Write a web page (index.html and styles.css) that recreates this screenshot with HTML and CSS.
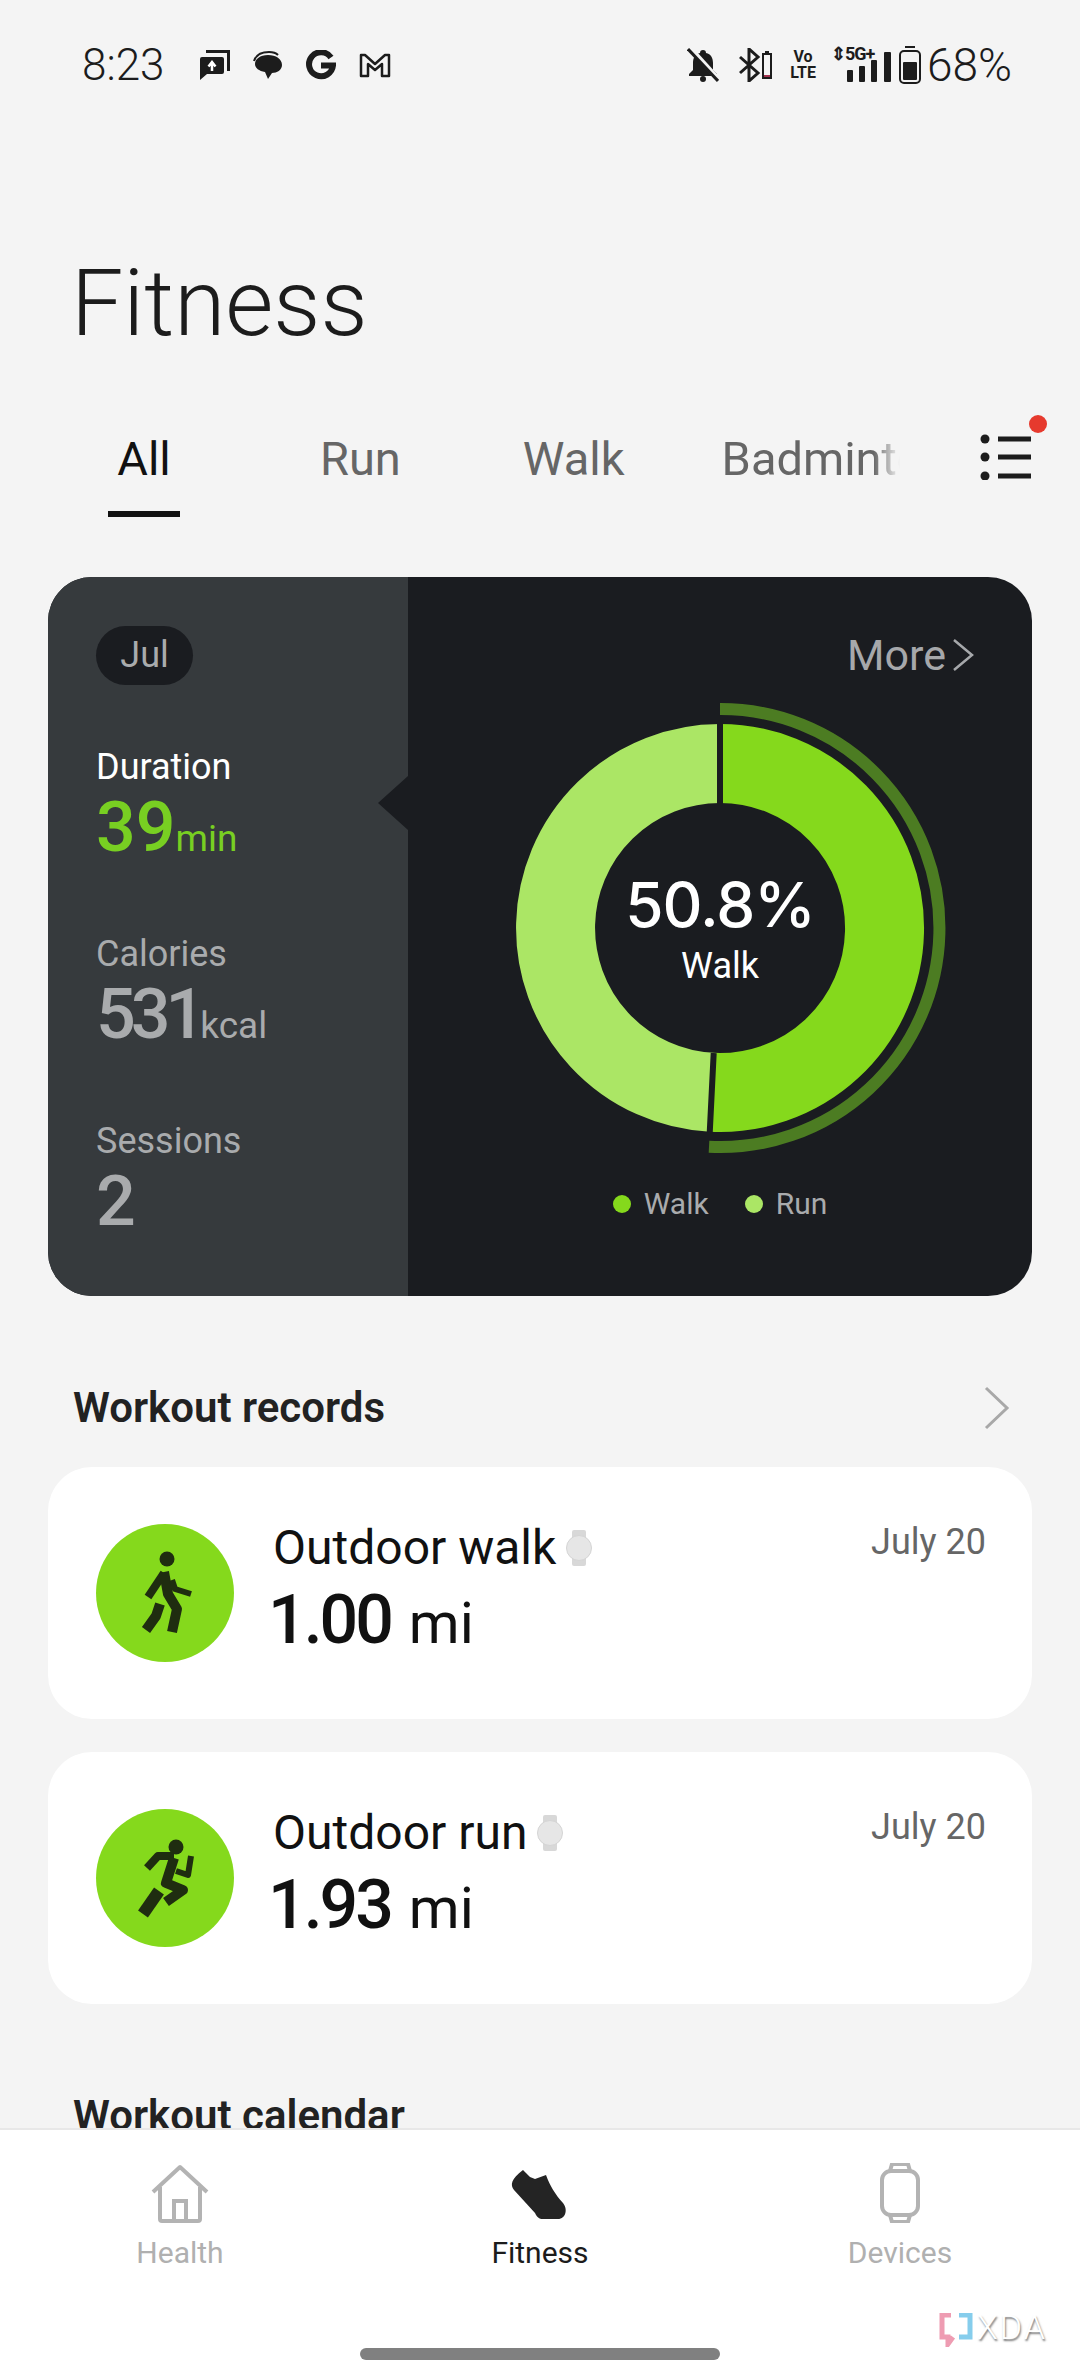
FILE: index.html
```html
<!DOCTYPE html>
<html>
  <head>
    <meta charset="UTF-8" />
    <title>Fitness</title>
    <link rel="stylesheet" href="styles.css">
  </head>
  <body>
    <main class="content">
      <div class="status-bar">
        <span class="clock">8:23</span>
        <div class="notif-icons">
          <svg width="30" height="30" viewBox="0 0 30 30"><path d="M6 0h24v21h-3V3H6z" fill="#1c1c1c"/><path d="M2 7h20a2 2 0 0 1 2 2v13a2 2 0 0 1-2 2H7l-7 6V9a2 2 0 0 1 2-2z" fill="#1c1c1c"/><path d="M12 21v-7M8.5 16.500L12 12l3.500 4.500" stroke="#fff" stroke-width="2.500" fill="none"/></svg>
          <svg width="30" height="30" viewBox="0 0 30 30"><path d="M15 5c8 0 14 4 14 10 0 5-5 8-10 8l-4 6-3-7C6 21 2 18 2 14c0-5 5-9 13-9z" fill="#1c1c1c"/><path d="M1 11c2-6 8-9 15-9 4 0 7 1 9 3" stroke="#1c1c1c" stroke-width="2" fill="none"/></svg>
          <svg width="30" height="30" viewBox="0 0 30 30"><path d="M25 7.500A12 12 0 1 0 27 15.500H15" stroke="#1c1c1c" stroke-width="6" fill="none"/></svg>
          <svg width="32" height="26" viewBox="0 0 32 26"><path d="M2 24V3h4l10 9 10-9h4v21h-7V12l-7 6-7-6v12z" stroke="#1c1c1c" stroke-width="2.500" fill="none" stroke-linejoin="round"/></svg>
        </div>
        <div class="sys-icons">
          <svg class="ic-mute" width="32" height="34" viewBox="0 0 32 34"><path d="M16 2c-2 0-3 1-3 3-5 1-7 5-7 10v7l-4 4v2h28v-2l-4-4v-7c0-5-2-9-7-10 0-2-1-3-3-3z" fill="#1c1c1c"/><circle cx="16" cy="31" r="3" fill="#1c1c1c"/><path d="M3 0l29 32" stroke="#f4f4f4" stroke-width="5"/><path d="M1 1l30 32" stroke="#1c1c1c" stroke-width="3"/></svg>
          <svg class="ic-bt" width="34" height="34" viewBox="0 0 34 34"><path d="M2 9l18 16-9 8V1l9 8L2 25" stroke="#1c1c1c" stroke-width="3" fill="none"/><path d="M25 6h8v24h-8z" fill="none" stroke="#1c1c1c" stroke-width="2"/><path d="M27 3h4v3h-4z" fill="#1c1c1c"/><path d="M26 27h6v2h-6z" fill="#a3324f"/></svg>
          <div class="volte"><span>Vo</span><span>LTE</span></div>
          <div class="signal">
            <span class="five-g">&#8661;5G+</span>
            <svg width="44" height="30" viewBox="0 0 44 30"><rect y="18" width="6" height="12" rx="1" fill="#1c1c1c"/><rect x="12" y="14" width="6" height="16" rx="1" fill="#1c1c1c"/><rect x="24" y="8" width="6" height="22" rx="1" fill="#1c1c1c"/><rect x="37" width="7" height="30" rx="1" fill="#1c1c1c"/></svg>
          </div>
          <svg class="ic-batt" width="22" height="38" viewBox="0 0 22 38"><rect x="6" width="10" height="2" fill="#1c1c1c"/><rect x="1" y="5" width="20" height="32" rx="4" fill="none" stroke="#1c1c1c" stroke-width="2"/><rect x="4" y="16" width="14" height="18" rx="1" fill="#1c1c1c"/></svg>
          <span class="batt-pct">68%</span>
        </div>
      </div>

      <h1 class="page-title">Fitness</h1>

      <div class="tabs">
        <div class="tab tab-active">All</div>
        <div class="tab tab-run">Run</div>
        <div class="tab tab-walk">Walk</div>
        <div class="tab tab-fade">Badminton</div>
        <div class="tab-menu">
          <svg width="58" height="62" viewBox="0 0 58 62"><circle cx="5" cy="21" r="4.500" fill="#1c1c1c"/><circle cx="5" cy="39" r="4.500" fill="#1c1c1c"/><circle cx="5" cy="58" r="4.500" fill="#1c1c1c"/><rect x="18" y="18.500" width="33" height="5" fill="#1c1c1c"/><rect x="18" y="36.500" width="33" height="5" fill="#1c1c1c"/><rect x="18" y="55.500" width="33" height="5" fill="#1c1c1c"/></svg>
          <span class="red-dot"></span>
        </div>
      </div>

      <section class="summary">
        <div class="summary-left">
          <span class="month-pill">Jul</span>
          <div class="stat stat-active">
            <div class="stat-label">Duration</div>
            <div class="stat-value">39<small>min</small></div>
          </div>
          <div class="stat">
            <div class="stat-label">Calories</div>
            <div class="stat-value tight">531<small>kcal</small></div>
          </div>
          <div class="stat">
            <div class="stat-label">Sessions</div>
            <div class="stat-value">2</div>
          </div>
          <span class="pointer"></span>
        </div>
        <div class="summary-right">
          <div class="more">More
            <svg width="22" height="34" viewBox="0 0 22 34"><path d="M2 2l18 15L2 32" stroke="#a6a8ab" stroke-width="2.500" fill="none"/></svg>
          </div>
          <div class="donut">
            <svg width="460" height="460" viewBox="-230 -230 460 460">
              <path d="M0 -164.500A164.500 164.500 0 1 1 -8.260 164.290" fill="none" stroke="#85d91c" stroke-width="79"/>
              <path d="M-8.260 164.290A164.500 164.500 0 0 1 0 -164.500" fill="none" stroke="#abe665" stroke-width="79"/>
              <path d="M0 -206V-124M-6.300 125L-10.300 205" stroke="#1a1c20" stroke-width="6" fill="none"/>
              <path d="M0 -219A219 219 0 1 1 -11 218.700" fill="none" stroke="#4c7c22" stroke-width="12"/>
            </svg>
            <div class="donut-label">
              <div class="donut-pct">50.8%</div>
              <div class="donut-name">Walk</div>
            </div>
          </div>
          <div class="legend">
            <span class="legend-item"><i class="dot-walk"></i>Walk</span>
            <span class="legend-item"><i class="dot-run"></i>Run</span>
          </div>
        </div>
      </section>

      <div class="section-head">
        <h2>Workout records</h2>
        <svg width="26" height="44" viewBox="0 0 26 44"><path d="M2 2l21 20L2 42" stroke="#a8a8a8" stroke-width="3" fill="none"/></svg>
      </div>

      <div class="record">
        <div class="record-icon">
          <svg width="138" height="138" viewBox="0 0 138 138">
            <circle cx="71" cy="35" r="7.500" fill="#1f2d10"/>
            <g stroke="#1f2d10" fill="none" stroke-linejoin="round">
              <path d="M68 49L52 73" stroke-width="8"/>
              <path d="M68 48L72 70L81 85L76 108" stroke-width="10"/>
              <path d="M76 56L79 65L95 70" stroke-width="6"/>
              <path d="M64 80L60 92L50 106" stroke-width="10"/>
            </g>
          </svg>
        </div>
        <div class="record-body">
          <div class="record-title">Outdoor walk
            <svg width="26" height="36" viewBox="0 0 26 36"><rect x="6" width="14" height="36" rx="2" fill="#d8d8d8"/><circle cx="13" cy="18" r="12.500" fill="#e6e6e6" stroke="#d4d4d4" stroke-width="1"/></svg>
          </div>
          <div class="record-value"><b>1.00</b> <small>mi</small></div>
        </div>
        <div class="record-date">July 20</div>
      </div>

      <div class="record">
        <div class="record-icon">
          <svg width="138" height="138" viewBox="0 0 138 138">
            <circle cx="80" cy="38" r="7.500" fill="#1f2d10"/>
            <g stroke="#1f2d10" fill="none" stroke-linejoin="round">
              <path d="M51 59L62 47H78" stroke-width="8"/>
              <path d="M78 49L70 74L87 81L70 93" stroke-width="10"/>
              <path d="M80 62L92 66L95 47" stroke-width="6"/>
              <path d="M63 82L47 105" stroke-width="12"/>
            </g>
          </svg>
        </div>
        <div class="record-body">
          <div class="record-title">Outdoor run
            <svg width="26" height="36" viewBox="0 0 26 36"><rect x="6" width="14" height="36" rx="2" fill="#d8d8d8"/><circle cx="13" cy="18" r="12.500" fill="#e6e6e6" stroke="#d4d4d4" stroke-width="1"/></svg>
          </div>
          <div class="record-value"><b>1.93</b> <small>mi</small></div>
        </div>
        <div class="record-date">July 20</div>
      </div>

      <div class="section-head calendar-head">
        <h2>Workout calendar</h2>
      </div>
    </main>

    <nav class="bottom-nav">
      <div class="nav-items">
        <div class="nav-item">
          <svg width="60" height="60" viewBox="0 0 60 60"><path d="M3 29L30 4l27 25" fill="none" stroke="#b3b3b3" stroke-width="4" stroke-linejoin="round"/><path d="M10 24v32a2 2 0 0 0 2 2h36a2 2 0 0 0 2-2V24" fill="none" stroke="#b3b3b3" stroke-width="4"/><path d="M24 58V38h12v20" fill="none" stroke="#b3b3b3" stroke-width="4"/></svg>
          <span>Health</span>
        </div>
        <div class="nav-item nav-active">
          <svg width="60" height="60" viewBox="0 0 60 60"><path d="M13 7l7 7 5 2 11-4c4 11 9 19 17 28 5 6 3 16-5 16H33c-4 0-6-2-8-6L4 27C0 22 1 16 13 7z" fill="#242424"/></svg>
          <span>Fitness</span>
        </div>
        <div class="nav-item">
          <svg width="60" height="60" viewBox="0 0 60 60"><path d="M20 8l2-7h16l2 7M20 52l2 7h16l2-7" fill="none" stroke="#b3b3b3" stroke-width="4"/><rect x="12" y="8" width="36" height="44" rx="9" fill="none" stroke="#b3b3b3" stroke-width="4"/></svg>
          <span>Devices</span>
        </div>
      </div>
      <div class="home-bar"></div>
      <div class="xda-mark">
        <svg width="36" height="34" viewBox="0 0 36 34"><path d="M12 2H3v22h6v7l5-7" fill="none" stroke="#ee9cb2" stroke-width="5"/><path d="M20 2h11v22H20" fill="none" stroke="#86cdec" stroke-width="5"/></svg>
        <span>XDA</span>
      </div>
    </nav>
  </body>
</html>
```
FILE: styles.css
```css
* {
  box-sizing: border-box;
}

html,
body {
  margin: 0;
  height: 2376px;
  overflow: hidden;
}

body {
  display: flex;
  flex-direction: column;
  background-color: #f4f4f4;
  color: #1c1c1c;
  font-family: Roboto, "Liberation Sans", sans-serif;
}

.content {
  height: 2128px;
  flex: none;
  overflow: hidden;
  padding: 0 48px;
}

/* status bar */
.status-bar {
  display: flex;
  align-items: center;
  height: 130px;
  margin: 0 -48px;
  padding: 0 68px 0 82px;
}

.clock {
  font-size: 44px;
  font-weight: 300;
  width: 118px;
}

.notif-icons {
  display: flex;
  align-items: center;
  gap: 23px;
}

.sys-icons {
  display: flex;
  align-items: center;
  margin-left: auto;
}

.ic-bt {
  margin-left: 19px;
}

.volte {
  display: flex;
  flex-direction: column;
  margin-left: 18px;
  font-size: 16px;
  font-weight: 700;
  line-height: 16px;
  text-align: center;
}

.signal {
  position: relative;
  width: 60px;
  height: 34px;
  margin-left: 15px;
}

.signal svg {
  position: absolute;
  right: 0;
  bottom: 0;
}

.five-g {
  position: absolute;
  left: 0;
  top: -5px;
  font-size: 18px;
  font-weight: 700;
  letter-spacing: -1px;
}

.ic-batt {
  margin-left: 8px;
}

.batt-pct {
  font-size: 46px;
  font-weight: 300;
  margin-left: 6px;
}

/* title + tabs */
.page-title {
  margin: 124px 0 0 23px;
  font-size: 93px;
  font-weight: 300;
  line-height: 100px;
}

.tabs {
  display: flex;
  align-items: flex-start;
  height: 153px;
  margin-top: 70px;
  font-size: 47px;
}

.tabs > * {
  flex: none;
}

.tab {
  line-height: 70px;
  color: #666;
}

.tab-active {
  width: 72px;
  height: 93px;
  margin-left: 60px;
  color: #111;
  text-align: center;
  border-bottom: 6px solid #111;
}

.tab-run {
  margin-left: 140px;
}

.tab-walk {
  margin-left: 122px;
}

.tab-fade {
  width: 178px;
  margin-left: 97px;
  overflow: hidden;
  white-space: nowrap;
  -webkit-mask-image: linear-gradient(to right, #000 85%, transparent);
  mask-image: linear-gradient(to right, #000 85%, transparent);
}

.tab-menu {
  position: relative;
  margin-left: 80px;
  margin-top: -6px;
}

.red-dot {
  position: absolute;
  top: -3px;
  right: -9px;
  width: 18px;
  height: 18px;
  border-radius: 50%;
  background: #e63a2e;
}

/* summary card */
.summary {
  display: flex;
  height: 719px;
  border-radius: 44px;
  overflow: hidden;
  background: #1a1c20;
}

.summary-left {
  position: relative;
  width: 360px;
  padding: 49px 0 0 48px;
  background: #363a3d;
}

.month-pill {
  display: block;
  width: 97px;
  height: 59px;
  border-radius: 30px;
  background: #1a1c20;
  color: #a9abad;
  font-size: 36px;
  line-height: 59px;
  text-align: center;
}

.stat {
  height: 187px;
  color: #a9abad;
}

.stat-active {
  margin-top: 61px;
  color: #fff;
}

.stat-label {
  font-size: 36px;
  line-height: 42px;
}

.stat-value {
  font-size: 70px;
  font-weight: 500;
  line-height: 78px;
}

.stat-value small {
  font-size: 37px;
  font-weight: 400;
  letter-spacing: 0;
}

.tight {
  letter-spacing: -5px;
}

.stat-active .stat-value {
  color: #78cf22;
}

.pointer {
  position: absolute;
  right: 0;
  top: 199px;
  border-style: solid;
  border-width: 27px 30px 27px 0;
  border-color: transparent #1a1c20 transparent transparent;
}

.summary-right {
  position: relative;
  flex: 1;
  display: flex;
  flex-direction: column;
  align-items: center;
}

.more {
  display: flex;
  align-items: center;
  gap: 6px;
  align-self: flex-end;
  margin: 54px 58px 0 0;
  color: #a6a8ab;
  font-size: 43px;
  line-height: 48px;
}

.donut {
  position: relative;
  width: 460px;
  height: 460px;
  margin-top: 19px;
}

.donut svg {
  display: block;
}

.donut-label {
  position: absolute;
  inset: 0;
  display: flex;
  flex-direction: column;
  align-items: center;
  justify-content: center;
  color: #fff;
}

.donut-pct {
  font-family: Inter, Roboto, sans-serif;
  font-size: 62px;
  font-weight: 500;
  letter-spacing: -1px;
  line-height: 72px;
}

.donut-name {
  margin-top: 3px;
  font-size: 36px;
  line-height: 44px;
}

.legend {
  display: flex;
  gap: 36px;
  margin-top: 28px;
  color: #a9abad;
  font-size: 30px;
  line-height: 36px;
}

.legend-item {
  display: flex;
  align-items: center;
  gap: 13px;
}

.legend-item i {
  width: 18px;
  height: 18px;
  border-radius: 50%;
}

.dot-walk {
  background: #85d91c;
}

.dot-run {
  background: #abe665;
}

/* records */
.section-head {
  display: flex;
  align-items: center;
  justify-content: space-between;
  height: 171px;
  padding: 85px 22px 33px 25px;
}

.section-head h2 {
  margin: 0;
  font-size: 42px;
  font-weight: 600;
  line-height: 48px;
  color: #222;
}

.record {
  display: flex;
  align-items: center;
  height: 252px;
  margin-bottom: 33px;
  padding: 0 48px;
  border-radius: 44px;
  background: #fff;
}

.record-icon {
  width: 138px;
  height: 138px;
  border-radius: 50%;
  background: #85d91c;
}

.record-icon svg {
  display: block;
}

.record-body {
  margin-left: 39px;
  margin-top: 5px;
}

.record-title {
  display: flex;
  align-items: center;
  gap: 10px;
  margin-bottom: 6px;
  color: #111;
  font-size: 48px;
  line-height: 60px;
}

.record-value {
  color: #111;
  line-height: 72px;
  margin-left: -5px;
}

.record-value b {
  font-size: 68px;
  font-weight: 500;
  letter-spacing: -3px;
}

.record-value small {
  margin-left: 14px;
  font-size: 58px;
}

.record-date {
  align-self: flex-start;
  margin-left: auto;
  margin-right: -2px;
  margin-top: 53px;
  color: #666;
  font-size: 36px;
  line-height: 44px;
}

.calendar-head {
  height: 120px;
  padding: 55px 25px 0 25px;
  align-items: flex-start;
}

/* bottom nav */
.bottom-nav {
  position: relative;
  flex: 1;
  background: #fff;
  border-top: 2px solid #e8e8e8;
}

.nav-items {
  display: flex;
}

.nav-item {
  flex: 1;
  display: flex;
  flex-direction: column;
  align-items: center;
  padding-top: 33px;
  color: #b0b0b0;
  font-size: 30px;
  line-height: 36px;
}

.nav-item svg {
  margin-bottom: 12px;
}

.nav-active {
  color: #1c1c1c;
}

.home-bar {
  width: 360px;
  height: 12px;
  margin: 77px auto 0;
  border-radius: 6px;
  background: #808080;
}

.xda-mark {
  position: absolute;
  right: 33px;
  bottom: 29px;
  display: flex;
  align-items: flex-start;
  gap: 2px;
}

.xda-mark span {
  color: #fff;
  font-size: 34px;
  font-weight: 300;
  line-height: 28px;
  letter-spacing: 2px;
  text-shadow: 1px 2px 2px #777;
}
```
